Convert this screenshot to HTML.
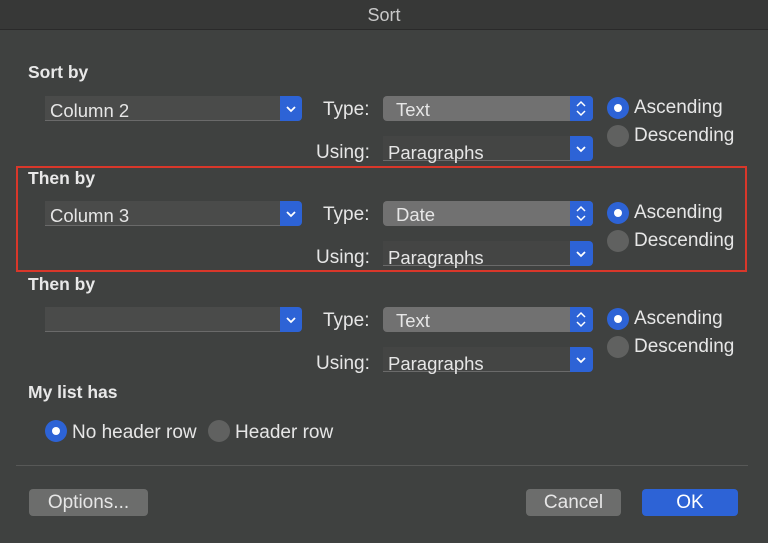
<!DOCTYPE html>
<html><head><style>
*{margin:0;padding:0;box-sizing:border-box}
body{width:768px;height:543px;background:#3f4140;font-family:"Liberation Sans",sans-serif;color:#e6e6e6;position:relative;overflow:hidden}
.a{position:absolute}
.title{left:0;top:0;width:768px;height:30px;background:#373837;border-bottom:1px solid #2a2a2a;text-align:center;font-size:18px;line-height:30px;color:#c8c8c8}
.h{font-size:17.5px;font-weight:bold;color:#e8e8e8}
.lbl{font-size:19px}
.pop{background:#4a4b4a;border-bottom:1px solid #6a6a6a;height:25px;font-size:18.5px;line-height:29px;padding-left:5px}
.pp{line-height:33px;background:#444544}
.blue{background:#2d63d6;border-radius:0 4px 4px 0}
.tp{background:#717171;border-radius:4px;height:25px;font-size:18.5px;line-height:27px;padding-left:13px}
.rad{width:22px;height:22px;border-radius:50%}
.on{background:#2d63d6}
.on:after{content:"";position:absolute;left:7px;top:7px;width:8px;height:8px;border-radius:50%;background:#fff}
.off{background:#606160}
.btn{background:#6c6d6c;border-radius:4px;height:27px;font-size:19px;line-height:27px;text-align:center}
</style></head><body>
<div class="a title">Sort</div>

<div class="a h" style="left:28px;top:62px">Sort by</div>
<div class="a pop" style="left:45px;top:96px;width:235px">Column 2</div>
<div class="a blue" style="left:280px;top:96px;width:22px;height:25px"><svg width="22" height="25"><path d="M7 11l4 4 4-4" stroke="#fff" stroke-width="1.8" fill="none"/></svg></div>
<div class="a lbl" style="left:323px;top:99px">Type:</div>
<div class="a tp" style="left:383px;top:96px;width:210px">Text</div>
<div class="a blue" style="left:570px;top:96px;width:23px;height:25px"><svg width="23" height="25"><path d="M7 10l4-4 4 4M7 15l4 4 4-4" stroke="#fff" stroke-width="1.5" fill="none"/></svg></div>
<div class="a lbl" style="left:316px;top:142px">Using:</div>
<div class="a pop pp" style="left:383px;top:136px;width:187px">Paragraphs</div>
<div class="a blue" style="left:570px;top:136px;width:23px;height:25px"><svg width="23" height="25"><path d="M7 11l4 4 4-4" stroke="#fff" stroke-width="1.8" fill="none"/></svg></div>
<div class="a rad on" style="left:607px;top:97px"></div>
<div class="a lbl" style="left:634px;top:97px">Ascending</div>
<div class="a rad off" style="left:607px;top:125px"></div>
<div class="a lbl" style="left:634px;top:125px">Descending</div>

<div class="a" style="left:16px;top:166px;width:731px;height:106px;border:2px solid #d9372a"></div>
<div class="a h" style="left:28px;top:168px">Then by</div>
<div class="a pop" style="left:45px;top:201px;width:235px">Column 3</div>
<div class="a blue" style="left:280px;top:201px;width:22px;height:25px"><svg width="22" height="25"><path d="M7 11l4 4 4-4" stroke="#fff" stroke-width="1.8" fill="none"/></svg></div>
<div class="a lbl" style="left:323px;top:204px">Type:</div>
<div class="a tp" style="left:383px;top:201px;width:210px">Date</div>
<div class="a blue" style="left:570px;top:201px;width:23px;height:25px"><svg width="23" height="25"><path d="M7 10l4-4 4 4M7 15l4 4 4-4" stroke="#fff" stroke-width="1.5" fill="none"/></svg></div>
<div class="a lbl" style="left:316px;top:247px">Using:</div>
<div class="a pop pp" style="left:383px;top:241px;width:187px">Paragraphs</div>
<div class="a blue" style="left:570px;top:241px;width:23px;height:25px"><svg width="23" height="25"><path d="M7 11l4 4 4-4" stroke="#fff" stroke-width="1.8" fill="none"/></svg></div>
<div class="a rad on" style="left:607px;top:202px"></div>
<div class="a lbl" style="left:634px;top:202px">Ascending</div>
<div class="a rad off" style="left:607px;top:230px"></div>
<div class="a lbl" style="left:634px;top:230px">Descending</div>

<div class="a h" style="left:28px;top:274px">Then by</div>
<div class="a pop" style="left:45px;top:307px;width:235px"></div>
<div class="a blue" style="left:280px;top:307px;width:22px;height:25px"><svg width="22" height="25"><path d="M7 11l4 4 4-4" stroke="#fff" stroke-width="1.8" fill="none"/></svg></div>
<div class="a lbl" style="left:323px;top:310px">Type:</div>
<div class="a tp" style="left:383px;top:307px;width:210px">Text</div>
<div class="a blue" style="left:570px;top:307px;width:23px;height:25px"><svg width="23" height="25"><path d="M7 10l4-4 4 4M7 15l4 4 4-4" stroke="#fff" stroke-width="1.5" fill="none"/></svg></div>
<div class="a lbl" style="left:316px;top:353px">Using:</div>
<div class="a pop pp" style="left:383px;top:347px;width:187px">Paragraphs</div>
<div class="a blue" style="left:570px;top:347px;width:23px;height:25px"><svg width="23" height="25"><path d="M7 11l4 4 4-4" stroke="#fff" stroke-width="1.8" fill="none"/></svg></div>
<div class="a rad on" style="left:607px;top:308px"></div>
<div class="a lbl" style="left:634px;top:308px">Ascending</div>
<div class="a rad off" style="left:607px;top:336px"></div>
<div class="a lbl" style="left:634px;top:336px">Descending</div>

<div class="a h" style="left:28px;top:382px">My list has</div>
<div class="a rad on" style="left:45px;top:420px"></div>
<div class="a lbl" style="left:72px;top:422px">No header row</div>
<div class="a rad off" style="left:208px;top:420px"></div>
<div class="a lbl" style="left:235px;top:422px">Header row</div>

<div class="a" style="left:16px;top:465px;width:732px;height:1px;background:#575857"></div>
<div class="a btn" style="left:29px;top:489px;width:119px">Options...</div>
<div class="a btn" style="left:526px;top:489px;width:95px">Cancel</div>
<div class="a btn" style="left:642px;top:489px;width:96px;background:#2d63d6;color:#fff">OK</div>
</body></html>
